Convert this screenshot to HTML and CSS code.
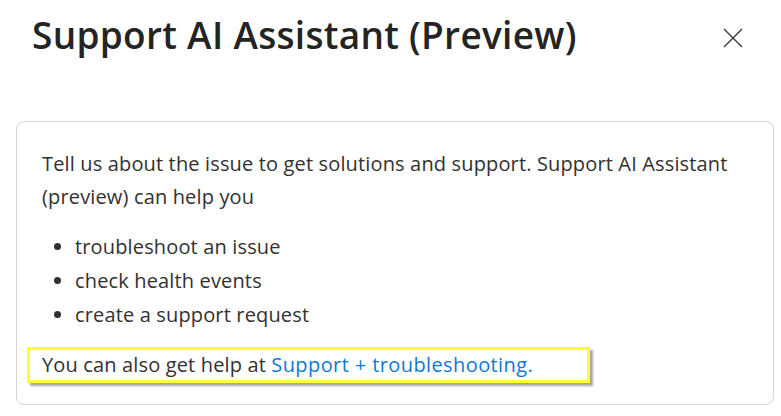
FILE: index.html
```html
<!DOCTYPE html>
<html lang="en">
<head>
<meta charset="utf-8">
<title>Support AI Assistant (Preview)</title>
<link rel="stylesheet" href="styles.css">
</head>
<body>
<div class="panel">
  <header class="header">
    <h1 class="title">Support AI Assistant (Preview)</h1>
    <button class="close" aria-label="Close">
      <svg width="20" height="20" viewBox="0 0 20 20"><path d="M1 1 L19 19 M19 1 L1 19" stroke="#3b3a39" stroke-width="1.4" fill="none"/></svg>
    </button>
  </header>
  <section class="card">
    <p class="intro">Tell us about the issue to get solutions and support. Support AI Assistant (preview) can help you</p>
    <ul class="list">
      <li>troubleshoot an issue</li>
      <li>check health events</li>
      <li>create a support request</li>
    </ul>
    <p class="help">You can also get help at <a class="link" href="#">Support + troubleshooting.</a></p>
  </section>
</div>
</body>
</html>
```
FILE: styles.css
```css
* { box-sizing: border-box; }
html, body { margin: 0; padding: 0; background: #ffffff; }
body {
  font-family: "Segoe UI", "Open Sans", "Noto Sans", sans-serif;
  color: #323130;
  width: 781px;
  height: 416px;
  overflow: hidden;
}
.panel { display: flex; flex-direction: column; }
.header {
  display: flex;
  align-items: flex-start;
  justify-content: space-between;
  padding: 11px 38px 0 32px;
  height: 121px;
}
.title {
  margin: 0;
  font-size: 37px;
  font-weight: 600;
  line-height: 48px;
  color: #242424;
  letter-spacing: 0.3px;
}
.close {
  border: 0;
  background: none;
  padding: 0;
  margin-top: 17px;
  width: 20px;
  height: 20px;
  cursor: pointer;
}
.close svg { display: block; }
.card {
  margin: 0 7px 0 16px;
  border: 1px solid #d4d4d4;
  border-radius: 8px;
  padding: 25px 12px 21px 25px;
  font-size: 20px;
  line-height: 33px;
  letter-spacing: 0.15px;
}
.intro { margin: 0; }
.list {
  margin: 17px 0 0 0;
  padding-left: 33px;
  line-height: 34px;
}
.list li { padding-left: 0; }
.help {
  margin: 15px 0 0 -15px;
  width: 563px;
  height: 36px;
  border: 3px solid #ffff33;
  box-shadow: 3px 3px 2px rgba(0,0,0,0.35);
  padding: 0 0 0 12px;
  line-height: 30px;
}
.link { color: #0f78d4; text-decoration: none; letter-spacing: 0.4px; }
```
